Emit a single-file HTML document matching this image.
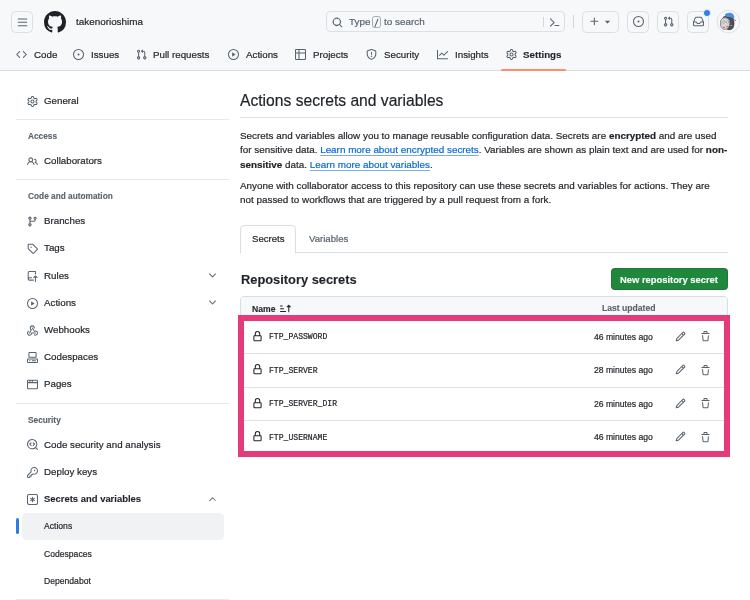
<!DOCTYPE html><html><head><meta charset="utf-8"><style>
html,body{margin:0;padding:0;width:750px;height:600px;overflow:hidden;background:#fff;font-family:'Liberation Sans', sans-serif}
.t{position:absolute;white-space:nowrap;-webkit-text-stroke:0.2px currentColor;will-change:transform}
.nb{-webkit-text-stroke:0.12px currentColor}
.r{position:absolute}
a{color:#0969da}
b{font-weight:700}
</style></head><body><div class="r" style="left:0px;top:0px;width:750.00px;height:70.00px;background:#f6f8fa;border-bottom:1px solid #d9dee3"></div><div class="r" style="left:11px;top:11px;width:21.50px;height:21.50px;box-sizing:border-box;border:1px solid #dce0e5;border-radius:4.5px;background:#f6f8fa"></div><svg class="r" style="left:16.5px;top:16.5px" width="11" height="11" viewBox="0 0 16 16" fill="#59636e"><path d="M1 2.75A.75.75 0 0 1 1.75 2h12.5a.75.75 0 0 1 0 1.5H1.75A.75.75 0 0 1 1 2.75Zm0 5A.75.75 0 0 1 1.75 7h12.5a.75.75 0 0 1 0 1.5H1.75A.75.75 0 0 1 1 7.75ZM1.75 12h12.5a.75.75 0 0 1 0 1.5H1.75a.75.75 0 0 1 0-1.5Z"/></svg><svg class="r" style="left:43.5px;top:10.8px" width="22" height="22" viewBox="0 0 16 16" fill="#1f2328"><path d="M8 0c4.42 0 8 3.58 8 8a8.013 8.013 0 0 1-5.45 7.59c-.4.08-.55-.17-.55-.38 0-.27.01-1.13.01-2.2 0-.75-.25-1.230-.54-1.48 1.78-.2 3.65-.88 3.65-3.95 0-.88-.31-1.590-.82-2.150.08-.2.36-1.020-.08-2.12 0 0-.67-.22-2.2.82-.64-.18-1.320-.27-2-.27-.68 0-1.360.09-2 .27-1.530-1.030-2.2-.82-2.2-.82-.44 1.1-.16 1.920-.08 2.12-.51.56-.82 1.280-.82 2.150 0 3.060 1.860 3.750 3.640 3.950-.23.2-.44.55-.51 1.070-.46.21-1.610.55-2.330-.66-.15-.24-.6-.83-1.230-.82-.67.01-.27.38.01.53.34.19.73.9.82 1.130.16.45.68 1.310 2.690.94 0 .67.01 1.300.01 1.490 0 .21-.15.45-.55.38A7.995 7.995 0 0 1 0 8c0-4.42 3.58-8 8-8Z"/></svg><div class="t" style="left:76.3px;top:16.92px;font-size:9.9px;line-height:9.9px;font-weight:400;color:#1f2328;font-family:'Liberation Sans', sans-serif;">takenorioshima</div><div class="r" style="left:326.4px;top:11px;width:238.60px;height:21.30px;box-sizing:border-box;border:1px solid #dce0e5;border-radius:4px;background:#f6f8fa"></div><svg class="r" style="left:332.2px;top:16.8px" width="11" height="11" viewBox="0 0 16 16" fill="#59636e"><path d="M10.68 11.74a6 6 0 0 1-7.922-8.982 6 6 0 0 1 8.982 7.922l3.04 3.04a.749.749 0 0 1-.326 1.275.749.749 0 0 1-.734-.215ZM11.5 7a4.499 4.499 0 1 0-8.997 0A4.499 4.499 0 0 0 11.5 7Z"/></svg><div class="t" style="left:348.8px;top:16.92px;font-size:9.9px;line-height:9.9px;font-weight:400;color:#59636e;font-family:'Liberation Sans', sans-serif;">Type</div><div class="r" style="left:372.3px;top:16.2px;width:8.70px;height:11.40px;box-sizing:border-box;border:1.1px solid #a3aab1;border-radius:2.5px"></div><svg class="r" style="left:372px;top:17.5px" width="9" height="10" viewBox="0 0 9 10"><path d="M5.9 1.2 L2.9 8.6" stroke="#59636e" stroke-width="1.05" stroke-linecap="round"/></svg><div class="t" style="left:383.5px;top:16.92px;font-size:9.9px;line-height:9.9px;font-weight:400;color:#59636e;font-family:'Liberation Sans', sans-serif;">to search</div><div class="r" style="left:543.2px;top:17px;width:1.00px;height:9.60px;background:#d1d9e0"></div><svg class="r" style="left:549px;top:16.5px" width="11" height="11" viewBox="0 0 16 16" fill="#59636e"><path d="m6.354 8.04-4.773 4.773a.75.75 0 1 0 1.061 1.06L7.945 8.57a.75.75 0 0 0 0-1.06L2.642 2.206a.75.75 0 0 0-1.06 1.061L6.353 8.04ZM8.75 11.5a.75.75 0 0 0 0 1.5h5.5a.75.75 0 0 0 0-1.5h-5.5Z"/></svg><div class="r" style="left:573.3px;top:15.4px;width:1.00px;height:12.80px;background:#d1d9e0"></div><div class="r" style="left:582.4px;top:11px;width:36.20px;height:21.50px;box-sizing:border-box;border:1px solid #dce0e5;border-radius:4.5px;background:#f6f8fa"></div><svg class="r" style="left:588.5px;top:16.4px" width="11" height="11" viewBox="0 0 16 16" fill="#59636e"><path d="M7.75 2a.75.75 0 0 1 .75.75V7h4.25a.75.75 0 0 1 0 1.5H8.5v4.25a.75.75 0 0 1-1.5 0V8.5H2.75a.75.75 0 0 1 0-1.5H7V2.75A.75.75 0 0 1 7.75 2Z"/></svg><svg class="r" style="left:602.2px;top:16.4px" width="11" height="11" viewBox="0 0 16 16" fill="#59636e"><path d="m4.427 7.427 3.396 3.396a.25.25 0 0 0 .354 0l3.396-3.396A.25.25 0 0 0 11.396 7H4.604a.25.25 0 0 0-.177.427Z"/></svg><div class="r" style="left:627.3px;top:11px;width:21.50px;height:21.50px;box-sizing:border-box;border:1px solid #dce0e5;border-radius:4.5px;background:#f6f8fa"></div><svg class="r" style="left:632.7px;top:16.4px" width="11" height="11" viewBox="0 0 16 16" fill="#59636e"><path d="M8 9.5a1.5 1.5 0 1 0 0-3 1.5 1.5 0 0 0 0 3Z"/><circle cx="8" cy="8" r="7.25" fill="none" stroke="#59636e" stroke-width="1.5"/></svg><div class="r" style="left:657.3px;top:11px;width:21.50px;height:21.50px;box-sizing:border-box;border:1px solid #dce0e5;border-radius:4.5px;background:#f6f8fa"></div><svg class="r" style="left:662.7px;top:16.4px" width="11" height="11" viewBox="0 0 16 16" fill="#59636e"><path d="M1.5 3.25a2.25 2.25 0 1 1 3 2.122v5.256a2.251 2.251 0 1 1-1.5 0V5.372A2.25 2.25 0 0 1 1.5 3.25Zm5.677-.177L9.573.677A.25.25 0 0 1 10 .854V2.5h1A2.5 2.5 0 0 1 13.5 5v5.628a2.251 2.251 0 1 1-1.5 0V5a1 1 0 0 0-1-1h-1v1.646a.25.25 0 0 1-.427.177L7.177 3.427a.25.25 0 0 1 0-.354ZM3.75 2.5a.75.75 0 1 0 0 1.5.75.75 0 0 0 0-1.5Zm0 9.5a.75.75 0 1 0 0 1.5.75.75 0 0 0 0-1.5Zm8.25.75a.75.75 0 1 0 1.5 0 .75.75 0 0 0-1.5 0Z"/></svg><div class="r" style="left:687.2px;top:11px;width:21.50px;height:21.50px;box-sizing:border-box;border:1px solid #dce0e5;border-radius:4.5px;background:#f6f8fa"></div><svg class="r" style="left:692.6px;top:16.4px" width="11" height="11" viewBox="0 0 16 16" fill="#59636e"><path d="M2.8 2.06A1.75 1.75 0 0 1 4.41 1h7.18c.7 0 1.333.417 1.61 1.06l2.74 6.395c.04.093.06.194.06.295v4.5A1.75 1.75 0 0 1 14.25 15H1.75A1.75 1.75 0 0 1 0 13.25v-4.5c0-.101.02-.202.06-.295Zm1.61.44a.25.25 0 0 0-.23.152L1.887 8H4.75a.75.75 0 0 1 .6.3L6.625 10h2.75l1.275-1.7a.75.75 0 0 1 .6-.3h2.863L11.82 2.652a.25.25 0 0 0-.23-.152Zm10.09 7h-2.875l-1.275 1.7a.75.75 0 0 1-.6.3h-3.5a.75.75 0 0 1-.6-.3L4.375 9.5H1.5v3.75c0 .138.112.25.25.25h12.5a.25.25 0 0 0 .25-.25Z"/></svg><div class="r" style="left:703.2px;top:9.2px;width:7.60px;height:7.60px;border-radius:50%;background:#2f7fe8;box-sizing:border-box;border:1px solid #f6f8fa"></div><svg class="r" style="left:712px;top:6px" width="32" height="32" viewBox="0 0 600 600">
<circle cx="308" cy="292" r="212" fill="#f7f8f9" stroke="#d5d9de" stroke-width="14"/>
<path d="M200 215 C230 180 300 170 350 185 C400 205 420 250 420 320 C420 390 400 440 340 452 C300 458 270 440 255 410 L230 300 Z" fill="#4b4e54"/>
<path d="M160 300 C160 250 200 215 250 220 C300 225 330 255 335 300 C340 350 320 400 285 425 C250 450 200 440 175 405 C160 380 158 340 160 300Z" fill="#d3d4d7" stroke="#6a6d72" stroke-width="14"/>
<path d="M190 290 C200 265 230 255 255 270 C275 262 305 270 310 295 C315 330 290 345 255 340 C220 345 185 330 190 290Z" fill="#e9eaec"/>
<circle cx="225" cy="300" r="24" fill="#f4f4f5" stroke="#66696e" stroke-width="10"/><circle cx="290" cy="300" r="24" fill="#f4f4f5" stroke="#66696e" stroke-width="10"/>
<path d="M240 170 C260 130 320 115 370 135 C410 150 425 195 415 235 C390 215 340 205 300 205 C270 205 250 200 240 170Z" fill="#4b90e8"/>
<rect x="270" y="370" width="36" height="30" rx="6" fill="#f2785a"/>
<ellipse cx="222" cy="400" rx="20" ry="12" fill="#e2407e"/>
<ellipse cx="182" cy="325" rx="14" ry="10" fill="#f0a0b8"/>
<ellipse cx="360" cy="365" rx="14" ry="10" fill="#f0b0c0"/>
<path d="M410 245 L455 265 L440 285 Z" fill="#e0507a"/>
</svg><svg class="r" style="left:16.4px;top:49.3px" width="11" height="11" viewBox="0 0 16 16" fill="#59636e"><path d="m11.28 3.22 4.25 4.25a.75.75 0 0 1 0 1.06l-4.25 4.25a.749.749 0 0 1-1.275-.326.749.749 0 0 1 .215-.734L13.94 8l-3.72-3.72a.749.749 0 0 1 .326-1.275.749.749 0 0 1 .734.215Zm-6.56 0a.751.751 0 0 1 1.042.018.751.751 0 0 1 .018 1.042L2.06 8l3.72 3.72a.749.749 0 0 1-.326 1.275.749.749 0 0 1-.734-.215L.47 8.53a.75.75 0 0 1 0-1.06Z"/></svg><div class="t" style="left:33.5px;top:49.65px;font-size:9.75px;line-height:9.75px;font-weight:400;color:#1f2328;font-family:'Liberation Sans', sans-serif;">Code</div><svg class="r" style="left:72.9px;top:49.3px" width="11" height="11" viewBox="0 0 16 16" fill="#59636e"><path d="M8 9.5a1.5 1.5 0 1 0 0-3 1.5 1.5 0 0 0 0 3Z"/><circle cx="8" cy="8" r="7.25" fill="none" stroke="#59636e" stroke-width="1.5"/></svg><div class="t" style="left:90.5px;top:49.65px;font-size:9.75px;line-height:9.75px;font-weight:400;color:#1f2328;font-family:'Liberation Sans', sans-serif;">Issues</div><svg class="r" style="left:135.6px;top:49.3px" width="11" height="11" viewBox="0 0 16 16" fill="#59636e"><path d="M1.5 3.25a2.25 2.25 0 1 1 3 2.122v5.256a2.251 2.251 0 1 1-1.5 0V5.372A2.25 2.25 0 0 1 1.5 3.25Zm5.677-.177L9.573.677A.25.25 0 0 1 10 .854V2.5h1A2.5 2.5 0 0 1 13.5 5v5.628a2.251 2.251 0 1 1-1.5 0V5a1 1 0 0 0-1-1h-1v1.646a.25.25 0 0 1-.427.177L7.177 3.427a.25.25 0 0 1 0-.354ZM3.75 2.5a.75.75 0 1 0 0 1.5.75.75 0 0 0 0-1.5Zm0 9.5a.75.75 0 1 0 0 1.5.75.75 0 0 0 0-1.5Zm8.25.75a.75.75 0 1 0 1.5 0 .75.75 0 0 0-1.5 0Z"/></svg><div class="t" style="left:153.4px;top:49.65px;font-size:9.75px;line-height:9.75px;font-weight:400;color:#1f2328;font-family:'Liberation Sans', sans-serif;">Pull requests</div><svg class="r" style="left:227.8px;top:49.3px" width="11" height="11" viewBox="0 0 16 16" fill="#59636e"><circle cx="8" cy="8" r="7.25" fill="none" stroke="#59636e" stroke-width="1.5"/><path d="M6.379 5.227l4.264 2.559a.25.25 0 0 1 0 .428l-4.264 2.559A.25.25 0 0 1 6 10.559V5.442a.25.25 0 0 1 .379-.215Z"/></svg><div class="t" style="left:245.5px;top:49.65px;font-size:9.75px;line-height:9.75px;font-weight:400;color:#1f2328;font-family:'Liberation Sans', sans-serif;">Actions</div><svg class="r" style="left:294.8px;top:49.3px" width="11" height="11" viewBox="0 0 16 16" fill="#59636e"><path d="M0 1.75C0 .784.784 0 1.75 0h12.5C15.216 0 16 .784 16 1.75v12.5A1.75 1.75 0 0 1 14.25 16H1.75A1.75 1.75 0 0 1 0 14.25ZM6.5 6.5v8h7.75a.25.25 0 0 0 .25-.25V6.5Zm8-1.5V1.75a.25.25 0 0 0-.25-.25H6.5V5Zm-13 1.5v7.75c0 .138.112.25.25.25H5v-8ZM5 5V1.5H1.75a.25.25 0 0 0-.25.25V5Z"/></svg><div class="t" style="left:312.7px;top:49.65px;font-size:9.75px;line-height:9.75px;font-weight:400;color:#1f2328;font-family:'Liberation Sans', sans-serif;">Projects</div><svg class="r" style="left:365.6px;top:49.3px" width="11" height="11" viewBox="0 0 16 16" fill="#59636e"><path d="M7.467.133a1.748 1.748 0 0 1 1.066 0l5.25 1.68A1.75 1.75 0 0 1 15 3.48V7c0 1.566-.32 3.182-1.303 4.682-.983 1.498-2.585 2.813-5.032 3.855a1.697 1.697 0 0 1-1.33 0c-2.447-1.042-4.049-2.357-5.032-3.855C1.32 10.182 1 8.566 1 7V3.48a1.755 1.755 0 0 1 1.217-1.667Zm.61 1.429a.25.25 0 0 0-.153 0l-5.25 1.68a.25.25 0 0 0-.174.238V7c0 1.358.275 2.666 1.057 3.86.784 1.194 2.121 2.34 4.366 3.297a.196.196 0 0 0 .154 0c2.245-.956 3.582-2.104 4.366-3.298C13.225 9.666 13.5 8.36 13.5 7V3.48a.251.251 0 0 0-.174-.237l-5.25-1.68ZM8.75 4.75v3a.75.75 0 0 1-1.5 0v-3a.75.75 0 0 1 1.5 0ZM9 10.5a1 1 0 1 1-2 0 1 1 0 0 1 2 0Z"/></svg><div class="t" style="left:383.6px;top:49.65px;font-size:9.75px;line-height:9.75px;font-weight:400;color:#1f2328;font-family:'Liberation Sans', sans-serif;">Security</div><svg class="r" style="left:437px;top:49.3px" width="11" height="11" viewBox="0 0 16 16" fill="#59636e"><path d="M1.5 1.75V13.5h13.75a.75.75 0 0 1 0 1.5H.75a.75.75 0 0 1-.75-.75V1.75a.75.75 0 0 1 1.5 0Zm14.28 2.53-5.25 5.25a.75.75 0 0 1-1.06 0L7 7.06 4.28 9.78a.751.751 0 0 1-1.042-.018.751.751 0 0 1-.018-1.042l3.25-3.25a.75.75 0 0 1 1.06 0L10 7.94l4.72-4.72a.751.751 0 0 1 1.042.018.751.751 0 0 1 .018 1.042Z"/></svg><div class="t" style="left:454.5px;top:49.65px;font-size:9.75px;line-height:9.75px;font-weight:400;color:#1f2328;font-family:'Liberation Sans', sans-serif;">Insights</div><svg class="r" style="left:506.4px;top:49.3px" width="11" height="11" viewBox="0 0 16 16" fill="#59636e"><path d="M8 0a8.2 8.2 0 0 1 .701.031C9.444.095 9.99.645 10.16 1.29l.288 1.107c.018.066.079.158.212.224.231.114.454.243.668.386.123.082.233.09.299.071l1.103-.303c.644-.176 1.392.021 1.82.63.27.385.506.792.704 1.218.315.675.111 1.422-.364 1.891l-.814.806c-.049.048-.098.147-.088.294.016.257.016.515 0 .772-.01.147.038.246.088.294l.814.806c.475.469.679 1.216.364 1.891a7.977 7.977 0 0 1-.704 1.217c-.428.61-1.176.807-1.82.63l-1.102-.302c-.067-.019-.177-.011-.3.071a5.909 5.909 0 0 1-.668.386c-.133.066-.194.158-.211.224l-.29 1.106c-.168.646-.715 1.196-1.458 1.26a8.006 8.006 0 0 1-1.402 0c-.743-.064-1.289-.614-1.458-1.26l-.289-1.106c-.018-.066-.079-.158-.212-.224a5.738 5.738 0 0 1-.668-.386c-.123-.082-.233-.09-.299-.071l-1.103.303c-.644.176-1.392-.021-1.82-.63a8.12 8.12 0 0 1-.704-1.218c-.315-.675-.111-1.422.363-1.891l.815-.806c.05-.048.098-.147.088-.294a6.214 6.214 0 0 1 0-.772c.01-.147-.038-.246-.088-.294l-.815-.806C.635 6.045.431 5.298.746 4.623a7.92 7.920 0 0 1 .704-1.217c.428-.61 1.176-.807 1.820-.63l1.102.302c.067.019.177.011.3-.071.214-.143.437-.272.668-.386.133-.066.194-.158.211-.224l.29-1.106C6.009.645 6.556.095 7.299.03 7.53.01 7.764 0 8 0Zm-.571 1.525c-.036.003-.108.036-.137.146l-.289 1.105c-.147.561-.549.967-.998 1.189-.173.086-.34.183-.5.29-.417.278-.97.423-1.529.27l-1.103-.303c-.109-.03-.175.016-.195.045-.22.312-.412.644-.573.99-.014.031-.021.11.059.19l.815.806c.411.406.562.957.53 1.456a4.709 4.709 0 0 0 0 .582c.032.499-.119 1.05-.53 1.456l-.815.806c-.081.08-.073.159-.059.19.162.346.353.677.573.989.02.03.085.076.195.046l1.102-.303c.56-.153 1.113-.008 1.53.27.161.107.328.204.501.29.447.222.85.629.997 1.189l.289 1.105c.029.109.101.143.137.146a6.6 6.6 0 0 0 1.142 0c.036-.003.108-.036.137-.146l.289-1.105c.147-.561.549-.967.998-1.189.173-.086.34-.183.5-.29.417-.278.97-.423 1.529-.27l1.103.303c.109.029.175-.016.195-.045.22-.313.411-.644.573-.99.014-.031.021-.11-.059-.19l-.815-.806c-.411-.406-.562-.957-.53-1.456a4.709 4.709 0 0 0 0-.582c-.032-.499.119-1.05.53-1.456l.815-.806c.081-.08.073-.159.059-.19a6.464 6.464 0 0 0-.573-.989c-.02-.03-.085-.076-.195-.046l-1.102.303c-.56.153-1.113.008-1.53-.27a4.440 4.440 0 0 0-.501-.29c-.447-.222-.85-.629-.997-1.189l-.289-1.105c-.029-.11-.101-.143-.137-.146a6.6 6.6 0 0 0-1.142 0ZM11 8a3 3 0 1 1-6 0 3 3 0 0 1 6 0ZM9.5 8a1.5 1.5 0 1 0-3.001.001A1.5 1.5 0 0 0 9.5 8Z"/></svg><div class="t nb" style="left:522.8px;top:49.65px;font-size:9.75px;line-height:9.75px;font-weight:600;color:#1f2328;font-family:'Liberation Sans', sans-serif;">Settings</div><div class="r" style="left:501px;top:69.4px;width:65.00px;height:1.60px;background:#fd8c73;border-radius:1px"></div><svg class="r" style="left:27.1px;top:96.0px" width="11" height="11" viewBox="0 0 16 16" fill="#59636e"><path d="M8 0a8.2 8.2 0 0 1 .701.031C9.444.095 9.99.645 10.16 1.29l.288 1.107c.018.066.079.158.212.224.231.114.454.243.668.386.123.082.233.09.299.071l1.103-.303c.644-.176 1.392.021 1.82.63.27.385.506.792.704 1.218.315.675.111 1.422-.364 1.891l-.814.806c-.049.048-.098.147-.088.294.016.257.016.515 0 .772-.01.147.038.246.088.294l.814.806c.475.469.679 1.216.364 1.891a7.977 7.977 0 0 1-.704 1.217c-.428.61-1.176.807-1.82.63l-1.102-.302c-.067-.019-.177-.011-.3.071a5.909 5.909 0 0 1-.668.386c-.133.066-.194.158-.211.224l-.29 1.106c-.168.646-.715 1.196-1.458 1.26a8.006 8.006 0 0 1-1.402 0c-.743-.064-1.289-.614-1.458-1.26l-.289-1.106c-.018-.066-.079-.158-.212-.224a5.738 5.738 0 0 1-.668-.386c-.123-.082-.233-.09-.299-.071l-1.103.303c-.644.176-1.392-.021-1.82-.63a8.12 8.12 0 0 1-.704-1.218c-.315-.675-.111-1.422.363-1.891l.815-.806c.05-.048.098-.147.088-.294a6.214 6.214 0 0 1 0-.772c.01-.147-.038-.246-.088-.294l-.815-.806C.635 6.045.431 5.298.746 4.623a7.92 7.920 0 0 1 .704-1.217c.428-.61 1.176-.807 1.820-.63l1.102.302c.067.019.177.011.3-.071.214-.143.437-.272.668-.386.133-.066.194-.158.211-.224l.29-1.106C6.009.645 6.556.095 7.299.03 7.53.01 7.764 0 8 0Zm-.571 1.525c-.036.003-.108.036-.137.146l-.289 1.105c-.147.561-.549.967-.998 1.189-.173.086-.34.183-.5.29-.417.278-.97.423-1.529.27l-1.103-.303c-.109-.03-.175.016-.195.045-.22.312-.412.644-.573.99-.014.031-.021.11.059.19l.815.806c.411.406.562.957.53 1.456a4.709 4.709 0 0 0 0 .582c.032.499-.119 1.05-.53 1.456l-.815.806c-.081.08-.073.159-.059.19.162.346.353.677.573.989.02.03.085.076.195.046l1.102-.303c.56-.153 1.113-.008 1.53.27.161.107.328.204.501.29.447.222.85.629.997 1.189l.289 1.105c.029.109.101.143.137.146a6.6 6.6 0 0 0 1.142 0c.036-.003.108-.036.137-.146l.289-1.105c.147-.561.549-.967.998-1.189.173-.086.34-.183.5-.29.417-.278.97-.423 1.529-.27l1.103.303c.109.029.175-.016.195-.045.22-.313.411-.644.573-.99.014-.031.021-.11-.059-.19l-.815-.806c-.411-.406-.562-.957-.53-1.456a4.709 4.709 0 0 0 0-.582c-.032-.499.119-1.05.53-1.456l.815-.806c.081-.08.073-.159.059-.19a6.464 6.464 0 0 0-.573-.989c-.02-.03-.085-.076-.195-.046l-1.102.303c-.56.153-1.113.008-1.53-.27a4.440 4.440 0 0 0-.501-.29c-.447-.222-.85-.629-.997-1.189l-.289-1.105c-.029-.11-.101-.143-.137-.146a6.6 6.6 0 0 0-1.142 0ZM11 8a3 3 0 1 1-6 0 3 3 0 0 1 6 0ZM9.5 8a1.5 1.5 0 1 0-3.001.001A1.5 1.5 0 0 0 9.5 8Z"/></svg><div class="t" style="left:43.6px;top:96.25px;font-size:9.75px;line-height:9.75px;font-weight:400;color:#1f2328;font-family:'Liberation Sans', sans-serif;">General</div><div class="r" style="left:16.3px;top:119px;width:212.70px;height:1.00px;background:#e6e9ec"></div><div class="t nb" style="left:27.5px;top:131.97px;font-size:8.3px;line-height:8.3px;font-weight:600;color:#59636e;font-family:'Liberation Sans', sans-serif;">Access</div><svg class="r" style="left:27.1px;top:156.0px" width="11" height="11" viewBox="0 0 16 16" fill="#59636e"><path d="M2 5.5a3.5 3.5 0 1 1 5.898 2.549 5.508 5.508 0 0 1 3.034 4.084.75.75 0 1 1-1.482.235 4 4 0 0 0-7.9 0 .75.75 0 0 1-1.482-.236A5.507 5.507 0 0 1 3.102 8.05 3.493 3.493 0 0 1 2 5.5ZM11 4a3.001 3.001 0 0 1 2.22 5.018 5.01 5.01 0 0 1 2.56 3.012.749.749 0 0 1-.885.954.752.752 0 0 1-.549-.514 3.507 3.507 0 0 0-2.522-2.372.75.75 0 0 1-.574-.73v-.352a.75.75 0 0 1 .416-.672A1.5 1.5 0 0 0 11 5.5.75.75 0 0 1 11 4Zm-5.5-.5a2 2 0 1 0-.001 3.999A2 2 0 0 0 5.5 3.5Z"/></svg><div class="t" style="left:43.6px;top:156.25px;font-size:9.75px;line-height:9.75px;font-weight:400;color:#1f2328;font-family:'Liberation Sans', sans-serif;">Collaborators</div><div class="r" style="left:16.3px;top:179.3px;width:212.70px;height:1.00px;background:#e6e9ec"></div><div class="t nb" style="left:27.5px;top:192.27px;font-size:8.3px;line-height:8.3px;font-weight:600;color:#59636e;font-family:'Liberation Sans', sans-serif;">Code and automation</div><svg class="r" style="left:27.1px;top:216.0px" width="11" height="11" viewBox="0 0 16 16" fill="#59636e"><path d="M9.5 3.25a2.25 2.25 0 1 1 3 2.122V6A2.5 2.5 0 0 1 10 8.5H6a1 1 0 0 0-1 1v1.128a2.251 2.251 0 1 1-1.5 0V5.372a2.25 2.25 0 1 1 1.5 0v1.836A2.493 2.493 0 0 1 6 7h4a1 1 0 0 0 1-1v-.628A2.25 2.25 0 0 1 9.5 3.250Zm-6 0a.75.75 0 1 0 1.5 0 .75.75 0 0 0-1.5 0Zm8.25-.75a.75.75 0 1 0 0 1.5.75.75 0 0 0 0-1.5ZM4.25 12a.75.75 0 1 0 0 1.5.75.75 0 0 0 0-1.5Z"/></svg><div class="t" style="left:43.6px;top:216.25px;font-size:9.75px;line-height:9.75px;font-weight:400;color:#1f2328;font-family:'Liberation Sans', sans-serif;">Branches</div><svg class="r" style="left:27.1px;top:243.0px" width="11" height="11" viewBox="0 0 16 16" fill="#59636e"><path d="M1 7.775V2.75C1 1.784 1.784 1 2.75 1h5.025c.464 0 .91.184 1.238.513l6.25 6.25a1.75 1.75 0 0 1 0 2.474l-5.026 5.026a1.75 1.75 0 0 1-2.474 0l-6.25-6.25A1.752 1.752 0 0 1 1 7.775Zm1.5 0c0 .066.026.13.073.177l6.25 6.25a.25.25 0 0 0 .354 0l5.025-5.025a.25.25 0 0 0 0-.354l-6.25-6.25a.25.25 0 0 0-.177-.073H2.75a.25.25 0 0 0-.25.25ZM6 5a1 1 0 1 1 0 2 1 1 0 0 1 0-2Z"/></svg><div class="t" style="left:43.6px;top:243.25px;font-size:9.75px;line-height:9.75px;font-weight:400;color:#1f2328;font-family:'Liberation Sans', sans-serif;">Tags</div><svg class="r" style="left:27.1px;top:270.5px" width="11" height="11" viewBox="0 0 16 16" fill="#59636e"><path d="M1 2.5A2.5 2.5 0 0 1 3.5 0h8.75a.75.75 0 0 1 .75.75v3.5a.75.75 0 0 1-1.5 0V1.5h-8a1 1 0 0 0-1 1v6.708A2.492 2.492 0 0 1 3.5 9h3.25a.75.75 0 0 1 0 1.5H3.5a1 1 0 0 0 0 2h5.75a.75.75 0 0 1 0 1.5H3.5A2.5 2.5 0 0 1 1 11.5Zm13.23 7.79h-.001l-1.224-1.224v6.184a.75.75 0 0 1-1.5 0V9.066L10.28 10.29a.75.75 0 0 1-1.06-1.061l2.505-2.504a.75.75 0 0 1 1.06 0L15.29 9.23a.751.751 0 0 1-.018 1.042.751.751 0 0 1-1.042.018Z"/></svg><div class="t" style="left:43.6px;top:270.75px;font-size:9.75px;line-height:9.75px;font-weight:400;color:#1f2328;font-family:'Liberation Sans', sans-serif;">Rules</div><svg class="r" style="left:206.5px;top:269.6px" width="11" height="11" viewBox="0 0 16 16" fill="#59636e"><path d="M12.78 5.22a.749.749 0 0 1 0 1.06l-4.25 4.25a.749.749 0 0 1-1.06 0L3.22 6.28a.749.749 0 1 1 1.06-1.06L8 8.939l3.72-3.719a.749.749 0 0 1 1.06 0Z"/></svg><svg class="r" style="left:27.1px;top:297.6px" width="11" height="11" viewBox="0 0 16 16" fill="#59636e"><circle cx="8" cy="8" r="7.25" fill="none" stroke="#59636e" stroke-width="1.5"/><path d="M6.379 5.227l4.264 2.559a.25.25 0 0 1 0 .428l-4.264 2.559A.25.25 0 0 1 6 10.559V5.442a.25.25 0 0 1 .379-.215Z"/></svg><div class="t" style="left:43.6px;top:297.85px;font-size:9.75px;line-height:9.75px;font-weight:400;color:#1f2328;font-family:'Liberation Sans', sans-serif;">Actions</div><svg class="r" style="left:206.5px;top:296.9px" width="11" height="11" viewBox="0 0 16 16" fill="#59636e"><path d="M12.78 5.22a.749.749 0 0 1 0 1.06l-4.25 4.25a.749.749 0 0 1-1.06 0L3.22 6.28a.749.749 0 1 1 1.06-1.06L8 8.939l3.72-3.719a.749.749 0 0 1 1.06 0Z"/></svg><svg class="r" style="left:27.1px;top:325.0px" width="11" height="11" viewBox="0 0 16 16" fill="#59636e"><path d="M5.5 4.25a2.25 2.25 0 0 1 4.5 0 .75.75 0 0 0 1.5 0 3.75 3.75 0 1 0-6.14 2.889l-2.272 4.258a.75.75 0 0 0 1.324.706L7 7.25a.75.75 0 0 0-.309-1.015A2.25 2.25 0 0 1 5.5 4.25Z"/><path d="M7.364 3.607a.75.75 0 0 1 1.03.257l2.608 4.349a3.75 3.75 0 1 1-.628 6.785.75.75 0 0 1 .752-1.299 2.25 2.25 0 1 0-.033-3.88.75.75 0 0 1-1.03-.256L7.107 4.636a.75.75 0 0 1 .257-1.03Z"/><path d="M2.9 8.776A.75.75 0 0 1 2.625 9.8 2.25 2.25 0 1 0 6 11.75a.75.75 0 0 1 .75-.751h5.5a.75.75 0 0 1 0 1.5H7.425a3.751 3.751 0 1 1-5.55-3.998.75.75 0 0 1 1.024.274Z"/></svg><div class="t" style="left:43.6px;top:325.25px;font-size:9.75px;line-height:9.75px;font-weight:400;color:#1f2328;font-family:'Liberation Sans', sans-serif;">Webhooks</div><svg class="r" style="left:27.1px;top:352.1px" width="11" height="11" viewBox="0 0 16 16" fill="#59636e"><path d="M0 11.25c0-.966.784-1.75 1.75-1.75h12.5c.966 0 1.75.784 1.75 1.75v3A1.75 1.75 0 0 1 14.25 16H1.75A1.75 1.75 0 0 1 0 14.25Zm2-9.5C2 .784 2.784 0 3.75 0h8.5C13.216 0 14 .784 14 1.75v5a1.75 1.75 0 0 1-1.75 1.75h-8.5A1.75 1.75 0 0 1 2 6.75Zm1.75-.25a.25.25 0 0 0-.25.25v5c0 .138.112.25.25.25h8.5a.25.25 0 0 0 .25-.25v-5a.25.25 0 0 0-.25-.25Zm-2 9.5a.25.25 0 0 0-.25.25v3c0 .138.112.25.25.25h12.5a.25.25 0 0 0 .25-.25v-3a.25.25 0 0 0-.25-.25Z"/><path d="M7 12.75a.75.75 0 0 1 .75-.75h4.5a.75.75 0 0 1 0 1.5h-4.5a.75.75 0 0 1-.75-.75Zm-4 0a.75.75 0 0 1 .75-.75h.5a.75.75 0 0 1 0 1.5h-.5a.75.75 0 0 1-.75-.75Z"/></svg><div class="t" style="left:43.6px;top:352.35px;font-size:9.75px;line-height:9.75px;font-weight:400;color:#1f2328;font-family:'Liberation Sans', sans-serif;">Codespaces</div><svg class="r" style="left:27.1px;top:379.2px" width="11" height="11" viewBox="0 0 16 16" fill="#59636e"><path d="M0 2.75C0 1.784.784 1 1.75 1h12.5c.966 0 1.75.784 1.75 1.75v10.5A1.75 1.75 0 0 1 14.25 15H1.75A1.75 1.75 0 0 1 0 13.25ZM14.5 6h-13v7.25c0 .138.112.25.25.25h12.5a.25.25 0 0 0 .25-.25Zm-6-3.5v2h6V2.75a.25.25 0 0 0-.25-.25ZM5 2.5v2h2v-2Zm-3.25 0a.25.25 0 0 0-.25.25V4.5h2v-2Z"/></svg><div class="t" style="left:43.6px;top:379.45px;font-size:9.75px;line-height:9.75px;font-weight:400;color:#1f2328;font-family:'Liberation Sans', sans-serif;">Pages</div><div class="r" style="left:16.3px;top:403px;width:212.70px;height:1.00px;background:#e6e9ec"></div><div class="t nb" style="left:27.5px;top:415.57px;font-size:8.3px;line-height:8.3px;font-weight:600;color:#59636e;font-family:'Liberation Sans', sans-serif;">Security</div><svg class="r" style="left:27.1px;top:439.3px" width="11" height="11" viewBox="0 0 16 16" fill="#59636e"><path d="M8.47 4.97a.75.75 0 0 0 0 1.06L9.94 7.5 8.47 8.970a.75.75 0 1 0 1.06 1.06l2-2a.75.75 0 0 0 0-1.06l-2-2a.75.75 0 0 0-1.06 0ZM6.53 6.03a.75.75 0 0 0-1.06-1.06l-2 2a.75.75 0 0 0 0 1.06l2 2a.75.75 0 1 0 1.06-1.06L5.06 7.5l1.47-1.47Z"/><path d="M12.246 13.307a7.501 7.501 0 1 1 1.060-1.060l2.474 2.473a.75.75 0 1 1-1.06 1.06ZM1.5 7.5a6.002 6.002 0 0 0 3.608 5.504 6.002 6.002 0 0 0 6.486-1.117.748.748 0 0 1 .292-.293A6 6 0 1 0 1.5 7.5Z"/></svg><div class="t" style="left:43.6px;top:439.55px;font-size:9.75px;line-height:9.75px;font-weight:400;color:#1f2328;font-family:'Liberation Sans', sans-serif;">Code security and analysis</div><svg class="r" style="left:27.1px;top:466.9px" width="11" height="11" viewBox="0 0 16 16" fill="#59636e"><path d="M10.5 0a5.499 5.499 0 1 1-1.288 10.848l-.932.932a.749.749 0 0 1-.53.22H7v.75a.749.749 0 0 1-.22.53l-.5.5a.749.749 0 0 1-.53.22H5v.75a.749.749 0 0 1-.22.53l-.5.5a.749.749 0 0 1-.53.22h-2A1.75 1.75 0 0 1 0 14.25v-2c0-.199.079-.389.22-.53l4.932-4.932A5.5 5.5 0 0 1 10.5 0Zm-4 5.5c-.001.431.069.86.205 1.269a.75.75 0 0 1-.181.768L1.5 12.56v1.69c0 .138.112.25.25.25h1.69l.06-.06v-1.19a.75.75 0 0 1 .75-.75h1.19l.06-.06v-1.19a.75.75 0 0 1 .75-.75h1.19l1.023-1.025a.75.75 0 0 1 .768-.18A4 4 0 1 0 6.5 5.5ZM11 6a1 1 0 1 1 0-2 1 1 0 0 1 0 2Z"/></svg><div class="t" style="left:43.6px;top:467.15px;font-size:9.75px;line-height:9.75px;font-weight:400;color:#1f2328;font-family:'Liberation Sans', sans-serif;">Deploy keys</div><svg class="r" style="left:27.1px;top:493.9px" width="11" height="11" viewBox="0 0 16 16" fill="#59636e"><path d="M0 2.75A2.75 2.75 0 0 1 2.75 0h10.5A2.75 2.75 0 0 1 16 2.75v10.5A2.75 2.75 0 0 1 13.25 16H2.75A2.75 2.75 0 0 1 0 13.25ZM2.75 1.5c-.69 0-1.25.56-1.25 1.25v10.5c0 .69.56 1.25 1.25 1.25h10.5c.69 0 1.25-.56 1.25-1.25V2.75c0-.69-.56-1.25-1.25-1.25Z"/><path d="M8 4a.75.75 0 0 1 .75.75V6.7l1.69-.975a.75.75 0 0 1 .75 1.3L9.5 8l1.69.975a.75.75 0 0 1-.75 1.3L8.75 9.3v1.95a.75.75 0 0 1-1.5 0V9.3l-1.69.975a.75.75 0 0 1-.75-1.3L6.5 8l-1.69-.975a.75.75 0 0 1 .75-1.3L7.25 6.7V4.75A.75.75 0 0 1 8 4Z"/></svg><div class="t nb" style="left:43.6px;top:494.40px;font-size:9.45px;line-height:9.45px;font-weight:700;color:#1f2328;font-family:'Liberation Sans', sans-serif;">Secrets and variables</div><svg class="r" style="left:207.3px;top:493.5px" width="11" height="11" viewBox="0 0 16 16" fill="#59636e"><path d="M3.22 10.53a.749.749 0 0 1 0-1.06l4.25-4.25a.749.749 0 0 1 1.06 0l4.25 4.25a.749.749 0 0 1-1.275.326.749.749 0 0 1-.215-.734L8 6.561l-3.72 3.719a.749.749 0 0 1-1.06 0Z"/></svg><div class="r" style="left:21.7px;top:512.6px;width:202.10px;height:27.40px;background:#f0f2f4;border-radius:4.5px"></div><div class="r" style="left:16px;top:517.9px;width:2.70px;height:16.20px;background:#2f7be6;border-radius:2px"></div><div class="t" style="left:43.7px;top:521.62px;font-size:8.6px;line-height:8.6px;font-weight:400;color:#1f2328;font-family:'Liberation Sans', sans-serif;">Actions</div><div class="t" style="left:43.7px;top:549.52px;font-size:8.6px;line-height:8.6px;font-weight:400;color:#1f2328;font-family:'Liberation Sans', sans-serif;">Codespaces</div><div class="t" style="left:43.7px;top:576.52px;font-size:8.6px;line-height:8.6px;font-weight:400;color:#1f2328;font-family:'Liberation Sans', sans-serif;">Dependabot</div><div class="r" style="left:16.3px;top:599.2px;width:212.70px;height:1.00px;background:#e6e9ec"></div><div class="t" style="left:240.3px;top:92.95px;font-size:15.65px;line-height:15.65px;font-weight:400;color:#1f2328;font-family:'Liberation Sans', sans-serif;">Actions secrets and variables</div><div class="r" style="left:240px;top:116.7px;width:488.00px;height:1.00px;background:#dfe2e6"></div><div class="t" style="left:240.3px;top:129px;width:490px;white-space:normal;font-size:9.9px;line-height:14.25px;color:#1f2328">Secrets and variables allow you to manage reusable configuration data. Secrets are <b>encrypted</b> and are used for sensitive data. <a style="color:#0969da;text-decoration:underline;text-underline-offset:2px;text-decoration-color:rgba(9,105,218,0.55)">Learn more about encrypted secrets</a>. Variables are shown as plain text and are used for <b>non-sensitive</b> data. <a style="color:#0969da;text-decoration:underline;text-underline-offset:2px;text-decoration-color:rgba(9,105,218,0.55)">Learn more about variables</a>.</div><div class="t" style="left:240.3px;top:178.5px;width:480px;white-space:normal;font-size:9.9px;line-height:14.25px;color:#1f2328">Anyone with collaborator access to this repository can use these secrets and variables for actions. They are not passed to workflows that are triggered by a pull request from a fork.</div><div class="r" style="left:240px;top:251.5px;width:488.00px;height:1.00px;background:#d8dee4"></div><div class="r" style="left:240.2px;top:225.4px;width:56.30px;height:28.10px;box-sizing:border-box;border:1px solid #d8dee4;border-bottom:none;border-radius:4.5px 4.5px 0 0;background:#fff"></div><div class="t" style="left:251.8px;top:234.27px;font-size:9.6px;line-height:9.6px;font-weight:400;color:#1f2328;font-family:'Liberation Sans', sans-serif;">Secrets</div><div class="t" style="left:308.7px;top:234.27px;font-size:9.6px;line-height:9.6px;font-weight:400;color:#59636e;font-family:'Liberation Sans', sans-serif;">Variables</div><div class="t nb" style="left:240.5px;top:274.02px;font-size:12.85px;line-height:12.85px;font-weight:600;color:#1f2328;font-family:'Liberation Sans', sans-serif;">Repository secrets</div><div class="r" style="left:610.8px;top:268.4px;width:117.40px;height:21.80px;background:#1f883d;border-radius:4px;box-sizing:border-box;border:1px solid rgba(31,35,40,0.15)"></div><div class="t nb" style="left:620px;top:274.84px;font-size:9.4px;line-height:9.4px;font-weight:600;color:#fff;font-family:'Liberation Sans', sans-serif;">New repository secret</div><div class="r" style="left:240.3px;top:296.3px;width:487.70px;height:157.70px;box-sizing:border-box;border:1px solid #d8dee4;border-radius:4px;background:#fff;overflow:hidden"></div><div class="r" style="left:241.3px;top:297.3px;width:485.70px;height:23.20px;background:#f6f8fa;border-radius:3px 3px 0 0"></div><div class="t nb" style="left:251.9px;top:304.52px;font-size:8.6px;line-height:8.6px;font-weight:600;color:#1f2328;font-family:'Liberation Sans', sans-serif;">Name</div><svg class="r" style="left:279.8px;top:302.8px" width="11" height="11" viewBox="0 0 16 16" fill="#1f2328"><path d="m12.927 2.573 3 3A.25.25 0 0 1 15.75 6H13.5v6.75a.75.75 0 0 1-1.5 0V6H9.75a.25.25 0 0 1-.177-.427l3-3a.25.25 0 0 1 .354 0ZM0 12.25a.75.75 0 0 1 .75-.75h7.5a.75.75 0 0 1 0 1.5H.75a.75.75 0 0 1-.75-.75Zm0-4a.75.75 0 0 1 .75-.75h4.5a.75.75 0 0 1 0 1.5H.75A.75.75 0 0 1 0 8.25Zm0-4a.75.75 0 0 1 .75-.75h2.5a.75.75 0 0 1 0 1.5H.75A.75.75 0 0 1 0 4.25Z"/></svg><div class="t nb" style="left:601.5px;top:303.52px;font-size:8.6px;line-height:8.6px;font-weight:600;color:#59636e;font-family:'Liberation Sans', sans-serif;">Last updated</div><svg class="r" style="left:251.6px;top:330.7px" width="11" height="11" viewBox="0 0 16 16" fill="#1f2328"><path d="M4 4a4 4 0 0 1 8 0v2h.25c.966 0 1.75.784 1.75 1.75v5.5A1.75 1.75 0 0 1 12.25 15h-8.5A1.75 1.75 0 0 1 2 13.25v-5.5C2 6.784 2.784 6 3.75 6H4Zm8.25 3.5h-8.5a.25.25 0 0 0-.25.25v5.5c0 .138.112.25.25.25h8.5a.25.25 0 0 0 .25-.25v-5.5a.25.25 0 0 0-.25-.25ZM10.5 6V4a2.5 2.5 0 1 0-5 0v2Z"/></svg><div class="t" style="left:268.6px;top:333.44px;font-size:8.1px;line-height:8.1px;font-weight:400;color:#1f2328;font-family:'Liberation Mono', monospace;transform:scaleY(1.13);transform-origin:0 85%;">FTP_PASSWORD</div><div class="t" style="left:593.9px;top:333.02px;font-size:8.6px;line-height:8.6px;font-weight:400;color:#1f2328;font-family:'Liberation Sans', sans-serif;">46 minutes ago</div><svg class="r" style="left:675.1px;top:331.0px" width="11" height="11" viewBox="0 0 16 16" fill="#59636e"><path d="M11.013 1.427a1.75 1.75 0 0 1 2.474 0l1.086 1.086a1.75 1.75 0 0 1 0 2.474l-8.61 8.61c-.21.21-.47.364-.756.445l-3.251.93a.75.75 0 0 1-.927-.928l.929-3.25c.081-.286.235-.547.445-.758l8.61-8.61Zm.176 4.823L9.75 4.81l-6.286 6.287a.253.253 0 0 0-.064.108l-.558 1.953 1.953-.558a.253.253 0 0 0 .108-.064Zm1.238-3.763a.25.25 0 0 0-.354 0L10.811 3.75l1.439 1.44 1.263-1.263a.25.25 0 0 0 0-.354Z"/></svg><svg class="r" style="left:700.4px;top:331.3px" width="11" height="11" viewBox="0 0 16 16" fill="#59636e"><path d="M11 1.75V3h2.25a.75.75 0 0 1 0 1.5H2.75a.75.75 0 0 1 0-1.5H5V1.75C5 .784 5.784 0 6.75 0h2.5C10.216 0 11 .784 11 1.75ZM4.496 6.675l.66 6.6a.25.25 0 0 0 .249.225h5.19a.25.25 0 0 0 .249-.225l.66-6.6a.75.75 0 0 1 1.492.149l-.66 6.6A1.748 1.748 0 0 1 10.595 15h-5.19a1.75 1.75 0 0 1-1.741-1.575l-.66-6.6a.75.75 0 1 1 1.492-.15ZM6.5 1.75V3h3V1.75a.25.25 0 0 0-.25-.25h-2.5a.25.25 0 0 0-.25.25Z"/></svg><div class="r" style="left:241.3px;top:353.4px;width:485.70px;height:1.00px;background:#dde2e7"></div><svg class="r" style="left:251.6px;top:364.09999999999997px" width="11" height="11" viewBox="0 0 16 16" fill="#1f2328"><path d="M4 4a4 4 0 0 1 8 0v2h.25c.966 0 1.75.784 1.75 1.75v5.5A1.75 1.75 0 0 1 12.25 15h-8.5A1.75 1.75 0 0 1 2 13.25v-5.5C2 6.784 2.784 6 3.75 6H4Zm8.25 3.5h-8.5a.25.25 0 0 0-.25.25v5.5c0 .138.112.25.25.25h8.5a.25.25 0 0 0 .25-.25v-5.5a.25.25 0 0 0-.25-.25ZM10.5 6V4a2.5 2.5 0 1 0-5 0v2Z"/></svg><div class="t" style="left:268.6px;top:366.84px;font-size:8.1px;line-height:8.1px;font-weight:400;color:#1f2328;font-family:'Liberation Mono', monospace;transform:scaleY(1.13);transform-origin:0 85%;">FTP_SERVER</div><div class="t" style="left:593.9px;top:366.42px;font-size:8.6px;line-height:8.6px;font-weight:400;color:#1f2328;font-family:'Liberation Sans', sans-serif;">28 minutes ago</div><svg class="r" style="left:675.1px;top:364.4px" width="11" height="11" viewBox="0 0 16 16" fill="#59636e"><path d="M11.013 1.427a1.75 1.75 0 0 1 2.474 0l1.086 1.086a1.75 1.75 0 0 1 0 2.474l-8.61 8.61c-.21.21-.47.364-.756.445l-3.251.93a.75.75 0 0 1-.927-.928l.929-3.25c.081-.286.235-.547.445-.758l8.61-8.61Zm.176 4.823L9.75 4.81l-6.286 6.287a.253.253 0 0 0-.064.108l-.558 1.953 1.953-.558a.253.253 0 0 0 .108-.064Zm1.238-3.763a.25.25 0 0 0-.354 0L10.811 3.75l1.439 1.44 1.263-1.263a.25.25 0 0 0 0-.354Z"/></svg><svg class="r" style="left:700.4px;top:364.7px" width="11" height="11" viewBox="0 0 16 16" fill="#59636e"><path d="M11 1.75V3h2.25a.75.75 0 0 1 0 1.5H2.75a.75.75 0 0 1 0-1.5H5V1.75C5 .784 5.784 0 6.75 0h2.5C10.216 0 11 .784 11 1.75ZM4.496 6.675l.66 6.6a.25.25 0 0 0 .249.225h5.19a.25.25 0 0 0 .249-.225l.66-6.6a.75.75 0 0 1 1.492.149l-.66 6.6A1.748 1.748 0 0 1 10.595 15h-5.19a1.75 1.75 0 0 1-1.741-1.575l-.66-6.6a.75.75 0 1 1 1.492-.15ZM6.5 1.75V3h3V1.75a.25.25 0 0 0-.25-.25h-2.5a.25.25 0 0 0-.25.25Z"/></svg><div class="r" style="left:241.3px;top:386.8px;width:485.70px;height:1.00px;background:#dde2e7"></div><svg class="r" style="left:251.6px;top:397.5px" width="11" height="11" viewBox="0 0 16 16" fill="#1f2328"><path d="M4 4a4 4 0 0 1 8 0v2h.25c.966 0 1.75.784 1.75 1.75v5.5A1.75 1.75 0 0 1 12.25 15h-8.5A1.75 1.75 0 0 1 2 13.25v-5.5C2 6.784 2.784 6 3.75 6H4Zm8.25 3.5h-8.5a.25.25 0 0 0-.25.25v5.5c0 .138.112.25.25.25h8.5a.25.25 0 0 0 .25-.25v-5.5a.25.25 0 0 0-.25-.25ZM10.5 6V4a2.5 2.5 0 1 0-5 0v2Z"/></svg><div class="t" style="left:268.6px;top:400.24px;font-size:8.1px;line-height:8.1px;font-weight:400;color:#1f2328;font-family:'Liberation Mono', monospace;transform:scaleY(1.13);transform-origin:0 85%;">FTP_SERVER_DIR</div><div class="t" style="left:593.9px;top:399.82px;font-size:8.6px;line-height:8.6px;font-weight:400;color:#1f2328;font-family:'Liberation Sans', sans-serif;">26 minutes ago</div><svg class="r" style="left:675.1px;top:397.8px" width="11" height="11" viewBox="0 0 16 16" fill="#59636e"><path d="M11.013 1.427a1.75 1.75 0 0 1 2.474 0l1.086 1.086a1.75 1.75 0 0 1 0 2.474l-8.61 8.61c-.21.21-.47.364-.756.445l-3.251.93a.75.75 0 0 1-.927-.928l.929-3.25c.081-.286.235-.547.445-.758l8.61-8.61Zm.176 4.823L9.75 4.81l-6.286 6.287a.253.253 0 0 0-.064.108l-.558 1.953 1.953-.558a.253.253 0 0 0 .108-.064Zm1.238-3.763a.25.25 0 0 0-.354 0L10.811 3.75l1.439 1.44 1.263-1.263a.25.25 0 0 0 0-.354Z"/></svg><svg class="r" style="left:700.4px;top:398.1px" width="11" height="11" viewBox="0 0 16 16" fill="#59636e"><path d="M11 1.75V3h2.25a.75.75 0 0 1 0 1.5H2.75a.75.75 0 0 1 0-1.5H5V1.75C5 .784 5.784 0 6.75 0h2.5C10.216 0 11 .784 11 1.75ZM4.496 6.675l.66 6.6a.25.25 0 0 0 .249.225h5.19a.25.25 0 0 0 .249-.225l.66-6.6a.75.75 0 0 1 1.492.149l-.66 6.6A1.748 1.748 0 0 1 10.595 15h-5.19a1.75 1.75 0 0 1-1.741-1.575l-.66-6.6a.75.75 0 1 1 1.492-.15ZM6.5 1.75V3h3V1.75a.25.25 0 0 0-.25-.25h-2.5a.25.25 0 0 0-.25.25Z"/></svg><div class="r" style="left:241.3px;top:420.2px;width:485.70px;height:1.00px;background:#dde2e7"></div><svg class="r" style="left:251.6px;top:430.9px" width="11" height="11" viewBox="0 0 16 16" fill="#1f2328"><path d="M4 4a4 4 0 0 1 8 0v2h.25c.966 0 1.75.784 1.75 1.75v5.5A1.75 1.75 0 0 1 12.25 15h-8.5A1.75 1.75 0 0 1 2 13.25v-5.5C2 6.784 2.784 6 3.75 6H4Zm8.25 3.5h-8.5a.25.25 0 0 0-.25.25v5.5c0 .138.112.25.25.25h8.5a.25.25 0 0 0 .25-.25v-5.5a.25.25 0 0 0-.25-.25ZM10.5 6V4a2.5 2.5 0 1 0-5 0v2Z"/></svg><div class="t" style="left:268.6px;top:433.64px;font-size:8.1px;line-height:8.1px;font-weight:400;color:#1f2328;font-family:'Liberation Mono', monospace;transform:scaleY(1.13);transform-origin:0 85%;">FTP_USERNAME</div><div class="t" style="left:593.9px;top:433.22px;font-size:8.6px;line-height:8.6px;font-weight:400;color:#1f2328;font-family:'Liberation Sans', sans-serif;">46 minutes ago</div><svg class="r" style="left:675.1px;top:431.2px" width="11" height="11" viewBox="0 0 16 16" fill="#59636e"><path d="M11.013 1.427a1.75 1.75 0 0 1 2.474 0l1.086 1.086a1.75 1.75 0 0 1 0 2.474l-8.61 8.61c-.21.21-.47.364-.756.445l-3.251.93a.75.75 0 0 1-.927-.928l.929-3.25c.081-.286.235-.547.445-.758l8.61-8.61Zm.176 4.823L9.75 4.81l-6.286 6.287a.253.253 0 0 0-.064.108l-.558 1.953 1.953-.558a.253.253 0 0 0 .108-.064Zm1.238-3.763a.25.25 0 0 0-.354 0L10.811 3.75l1.439 1.44 1.263-1.263a.25.25 0 0 0 0-.354Z"/></svg><svg class="r" style="left:700.4px;top:431.5px" width="11" height="11" viewBox="0 0 16 16" fill="#59636e"><path d="M11 1.75V3h2.25a.75.75 0 0 1 0 1.5H2.75a.75.75 0 0 1 0-1.5H5V1.75C5 .784 5.784 0 6.75 0h2.5C10.216 0 11 .784 11 1.75ZM4.496 6.675l.66 6.6a.25.25 0 0 0 .249.225h5.19a.25.25 0 0 0 .249-.225l.66-6.6a.75.75 0 0 1 1.492.149l-.66 6.6A1.748 1.748 0 0 1 10.595 15h-5.19a1.75 1.75 0 0 1-1.741-1.575l-.66-6.6a.75.75 0 1 1 1.492-.15ZM6.5 1.75V3h3V1.75a.25.25 0 0 0-.25-.25h-2.5a.25.25 0 0 0-.25.25Z"/></svg><div class="r" style="left:238px;top:315px;width:492.00px;height:142.00px;box-sizing:border-box;border:6px solid #e43c7a"></div></body></html>
